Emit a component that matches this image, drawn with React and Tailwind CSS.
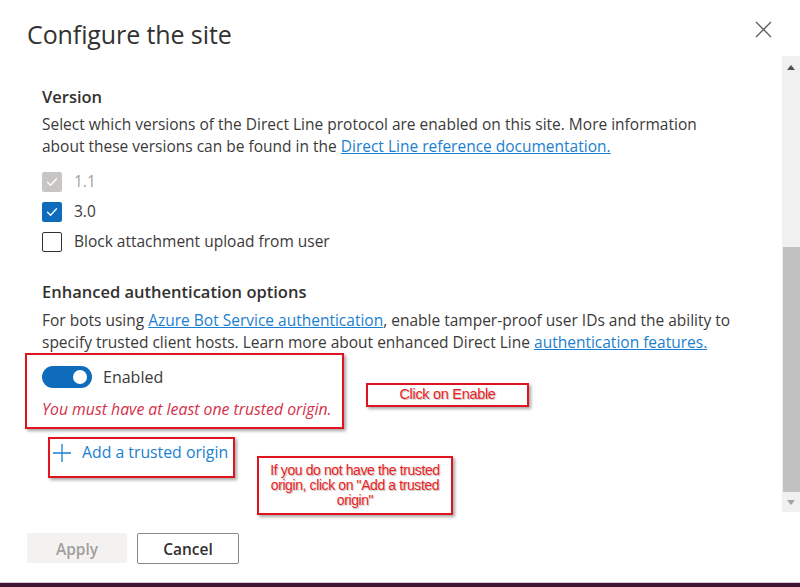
import React from "react";

function Check({ color = "white" }) {
  return (
    <svg width="14" height="14" viewBox="0 0 14 14" fill="none">
      <path d="M2.5 7.2 L5.6 10.2 L11.5 3.8" stroke={color} strokeWidth="1.3" strokeLinecap="round" strokeLinejoin="round" />
    </svg>
  );
}

function CheckRow({ state, label }) {
  let box;
  if (state === "disabled") {
    box = (
      <div className="w-5 h-5 rounded-[2px] bg-[#c8c6c4] flex items-center justify-center">
        <Check />
      </div>
    );
  } else if (state === "checked") {
    box = (
      <div className="w-5 h-5 rounded-[2px] bg-[#0f6cbd] flex items-center justify-center">
        <Check />
      </div>
    );
  } else {
    box = <div className="w-5 h-5 rounded-[2px] border border-[#323130] bg-white" />;
  }
  return (
    <div className="flex items-center h-[30px] gap-[12px]">
      {box}
      <span className={state === "disabled" ? "text-[#a19f9d]" : "text-[#3b3a39]"}>{label}</span>
    </div>
  );
}

export default function App() {
  return (
    <div
      className="relative w-[800px] h-[587px] bg-white flex flex-col overflow-hidden text-[15.5px] text-[#3b3a39]"
      style={{ fontFamily: '"Open Sans", "Noto Sans", sans-serif' }}
    >
      {/* header */}
      <div className="flex items-start justify-between h-[56px] pl-[27px] pr-[28px] pt-[17px]">
        <h1 className="text-[25px] leading-[34px] text-[#323130] font-normal tracking-[-0.1px]">Configure the site</h1>
        <button className="mt-[4px] text-[#605e5c]">
          <svg width="17" height="17" viewBox="0 0 17 17">
            <path d="M1 1 L16 16 M16 1 L1 16" stroke="#605e5c" strokeWidth="1.3" />
          </svg>
        </button>
      </div>

      {/* body + scrollbar */}
      <div className="flex h-[456px]">
        <div className="flex-1 pl-[42px] pr-[40px] pt-[30px]">
          <h2 className="text-[16.5px] font-semibold text-[#323130] leading-[22px]">Version</h2>
          <p className="mt-[5px] leading-[22px]">
            Select which versions of the Direct Line protocol are enabled on this site. More information about these versions can be found in the{" "}
            <a className="text-[#1a7fd0] underline">Direct Line reference documentation.</a>
          </p>
          <div className="mt-[10px] flex flex-col">
            <CheckRow state="disabled" label="1.1" />
            <CheckRow state="checked" label="3.0" />
            <CheckRow state="unchecked" label="Block attachment upload from user" />
          </div>

          <h2 className="mt-[24px] text-[16.5px] font-semibold text-[#323130] leading-[22px]">Enhanced authentication options</h2>
          <p className="mt-[6px] leading-[22px]">
            For bots using <a className="text-[#1a7fd0] underline">Azure Bot Service authentication</a>, enable tamper-proof user IDs and the ability to specify trusted client hosts. Learn more about enhanced Direct Line{" "}
            <a className="text-[#1a7fd0] underline">authentication features.</a>
          </p>

          <div className="mt-[13px] flex items-center gap-[11px] h-[22px]">
            <div className="w-[50px] h-[22px] rounded-full bg-[#0f6cbd] flex items-center justify-end pr-[5px]">
              <div className="w-[14px] h-[14px] rounded-full bg-white" />
            </div>
            <span className="text-[#3b3a39] text-[16px]">Enabled</span>
          </div>
          <div className="mt-[10px] italic text-[#d4304a] leading-[22px] text-[15.8px]">You must have at least one trusted origin.</div>

          <div className="mt-[21px] ml-[10px] flex items-center gap-[10px] text-[#1a7fd0] h-[24px] text-[15.8px]">
            <svg width="20" height="20" viewBox="0 0 20 20">
              <path d="M10 1 V19 M1 10 H19" stroke="#1a7fd0" strokeWidth="1.3" />
            </svg>
            <span>Add a trusted origin</span>
          </div>
        </div>

        {/* scrollbar */}
        <div className="w-[18px] bg-[#f0f0f0] flex flex-col items-center">
          <div className="h-[22px] flex items-center justify-center">
            <div className="w-0 h-0 border-l-[4px] border-r-[4px] border-b-[5px] border-l-transparent border-r-transparent border-b-[#505050]" />
          </div>
          <div className="mt-[169px] w-[17px] h-[245px] bg-[#c1c1c1]" />
          <div className="h-[20px] flex items-center justify-center">
            <div className="w-0 h-0 border-l-[4px] border-r-[4px] border-t-[5px] border-l-transparent border-r-transparent border-t-[#a3a3a3]" />
          </div>
        </div>
      </div>

      {/* footer */}
      <div className="flex items-start gap-[10px] pl-[27px] pt-[21px] h-[70px]">
        <button className="w-[100px] h-[30px] rounded-[2px] bg-[#f3f2f1] text-[#a19f9d] font-semibold text-[15.5px] pt-[3px]">Apply</button>
        <button className="w-[102px] h-[31px] rounded-[2px] border border-[#8a8886] text-[#323130] font-semibold text-[15.5px] pt-[3px]">Cancel</button>
      </div>
      <div className="h-[5px] bg-[#3d1530] border-t border-[#d8c8d2]" />

      {/* annotations */}
      <div className="absolute left-[25px] top-[353px] w-[319px] h-[76px] border-2 border-[#e0141e] shadow-[2px_2px_3px_rgba(0,0,0,0.35)]" />
      <div className="absolute left-[48px] top-[437px] w-[187px] h-[41px] border-2 border-[#e0141e] shadow-[2px_2px_3px_rgba(0,0,0,0.35)]" />
      <div
        className="absolute left-[366px] top-[383px] w-[163px] h-[24px] border-2 border-[#e0141e] bg-white shadow-[2px_2px_3px_rgba(0,0,0,0.35)] flex items-center justify-center text-[14.5px] text-[#ee1c24] tracking-[-0.3px]"
        style={{ fontFamily: '"Liberation Sans", Arial, sans-serif', textShadow: "1px 1px 1px rgba(0,0,0,0.25)" }}
      >
        Click on Enable
      </div>
      <div
        className="absolute left-[257px] top-[456px] w-[196px] h-[59px] border-2 border-[#e0141e] bg-white shadow-[2px_2px_3px_rgba(0,0,0,0.35)] flex items-center justify-center text-center text-[14px] leading-[15px] text-[#ee1c24] tracking-[-0.4px] px-[4px]"
        style={{ fontFamily: '"Liberation Sans", Arial, sans-serif', textShadow: "1px 1px 1px rgba(0,0,0,0.25)" }}
      >
        If you do not have the trusted origin, click on "Add a trusted origin"
      </div>
    </div>
  );
}
